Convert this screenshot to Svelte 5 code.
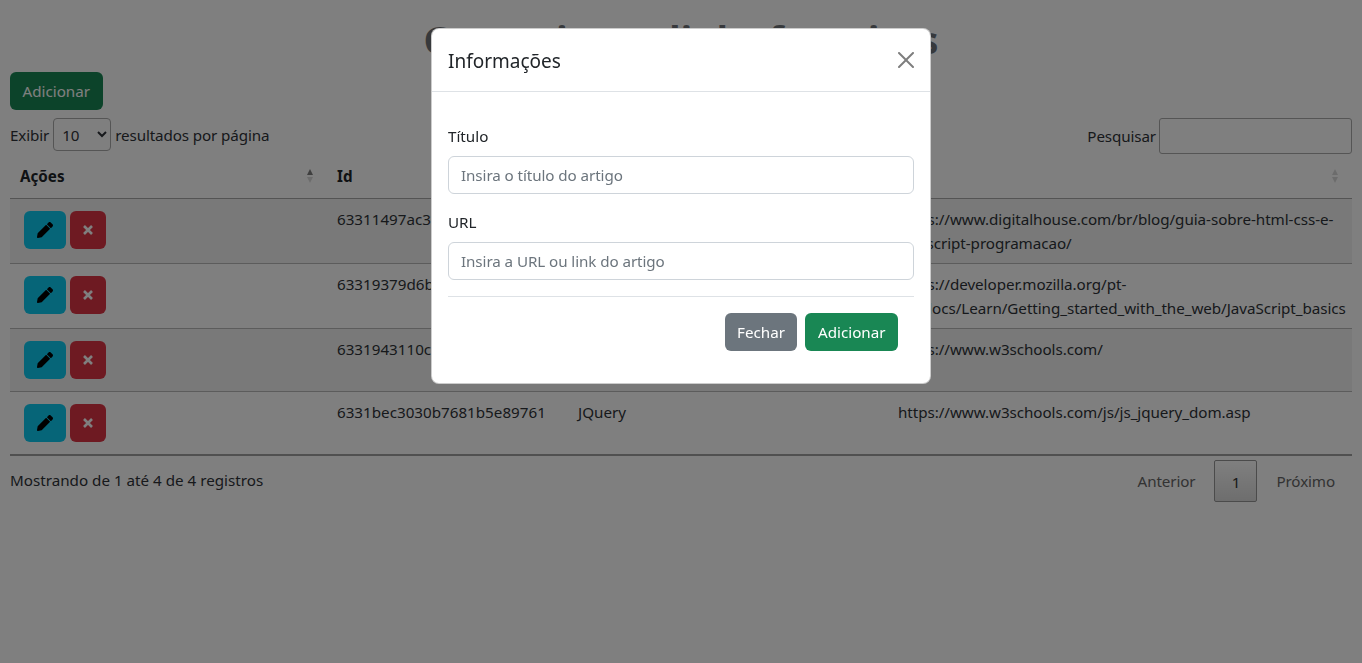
<script>
  const rows = [
    { id: '63311497ac3e5b7f1a2c4d10', title: 'HTML, CSS e JavaScript', url: 'https://www.digitalhouse.com/br/blog/guia-sobre-html-css-e-javascript-programacao/' },
    { id: '63319379d6b1f27c8e5a3b42', title: 'JavaScript básico', url: 'https://developer.mozilla.org/pt-BR/docs/Learn/Getting_started_with_the_web/JavaScript_basics' },
    { id: '6331943110cf8a2d4b7e9c06', title: 'W3Schools', url: 'https://www.w3schools.com/' },
    { id: '6331bec3030b7681b5e89761', title: 'JQuery', url: 'https://www.w3schools.com/js/js_jquery_dom.asp' }
  ];
</script>

<div class="page">
  <h1>Gerenciar os links favoritos</h1>
  <button class="btn green">Adicionar</button>
  <div class="controls">
    <div class="length">
      <span>Exibir</span>
      <select><option>10</option></select>
      <span>resultados por página</span>
    </div>
    <div class="search">
      <span>Pesquisar</span>
      <input type="text" />
    </div>
  </div>
  <table>
    <colgroup>
      <col class="c1" /><col class="c2" /><col class="c3" /><col />
    </colgroup>
    <thead>
      <tr>
        <th>Ações<span class="sort"><i class="up on"></i><i class="down"></i></span></th>
        <th>Id<span class="sort"><i class="up"></i><i class="down"></i></span></th>
        <th>Título<span class="sort"><i class="up"></i><i class="down"></i></span></th>
        <th>URL<span class="sort"><i class="up"></i><i class="down"></i></span></th>
      </tr>
    </thead>
    <tbody>
      {#each rows as r}
        <tr>
          <td class="actions">
            <button class="icon cyan" aria-label="Editar">
              <svg viewBox="0 0 512 512" width="16" height="16"><path d="M497.9 142.1l-46.1 46.1c-4.7 4.7-12.3 4.7-17 0l-111-111c-4.7-4.7-4.7-12.3 0-17l46.1-46.1c18.7-18.7 49.1-18.7 67.900 0l60.100 60.100c18.800 18.700 18.800 49.100 0 67.900zM284.200 99.800L21.600 362.400.400 483.900c-2.900 16.400 11.400 30.600 27.800 27.800l121.500-21.300 262.600-262.600c4.700-4.700 4.700-12.300 0-17l-111-111c-4.800-4.700-12.400-4.700-17.100 0z"/></svg>
            </button>
            <button class="icon red" aria-label="Excluir">
              <svg viewBox="0 0 12 12" width="12" height="12"><path d="M2 2l8 8M10 2l-8 8" stroke="#fff" stroke-width="2.600" fill="none"/></svg>
            </button>
          </td>
          <td>{r.id}</td>
          <td>{r.title}</td>
          <td class="url">{r.url}</td>
        </tr>
      {/each}
    </tbody>
  </table>
  <div class="foot">
    <span>Mostrando de 1 até 4 de 4 registros</span>
    <div class="pager">
      <span class="pg">Anterior</span>
      <span class="pg cur">1</span>
      <span class="pg last">Próximo</span>
    </div>
  </div>
</div>

<div class="backdrop"></div>

<div class="modal">
  <div class="m-head">
    <h5>Informações</h5>
    <button class="close" aria-label="Fechar">
      <svg viewBox="0 0 16 16" width="16" height="16"><path d="M.293.293a1 1 0 011.414 0L8 6.586 14.293.293a1 1 0 111.414 1.414L9.414 8l6.293 6.293a1 1 0 01-1.414 1.414L8 9.414l-6.293 6.293a1 1 0 01-1.414-1.414L6.586 8 .293 1.707a1 1 0 010-1.414z"/></svg>
    </button>
  </div>
  <div class="m-body">
    <label for="t">Título</label>
    <input id="t" class="ctl" placeholder="Insira o título do artigo" />
    <label for="u">URL</label>
    <input id="u" class="ctl" placeholder="Insira a URL ou link do artigo" />
    <div class="m-foot">
      <button class="btn gray">Fechar</button>
      <button class="btn green">Adicionar</button>
    </div>
  </div>
</div>

<style>
  :global(body) {
    margin: 0;
    background: #fff;
    font-family: "Noto Sans", "Open Sans", sans-serif;
    font-size: 15.2px;
    line-height: 24px;
    color: #2f3338;
    overflow: hidden;
  }
  .page {
    padding: 0 10px;
    height: 663px;
    box-sizing: border-box;
  }
  h1 {
    margin: 0;
    padding: 16px 0 8px;
    font-size: 37.800px;
    line-height: 48px;
    font-weight: 700;
    text-align: center;
    color: #6e7378;
  }
  .btn {
    display: inline-block;
    height: 38px;
    padding: 0 11.500px;
    border: 1px solid transparent;
    border-radius: 6px;
    font: inherit;
    color: #fff;
  }
  .green { background: #198754; }
  .gray { background: #6c757d; }
  .controls {
    display: flex;
    justify-content: space-between;
    margin-top: 8px;
    height: 36px;
    letter-spacing: -.12px;
  }
  .length, .search { display: flex; align-items: center; gap: 4px; }
  .length { height: 33px; }
  .length select {
    width: 58px;
    height: 33px;
    padding: 0 4px;
    font: inherit;
    letter-spacing: inherit;
    background: #fff;
    border: 1px solid #aaa;
    border-radius: 4px;
    color: #2f3338;
  }
  .search { gap: 3px; }
  .search input {
    width: 193px;
    height: 36px;
    box-sizing: border-box;
    border: 1px solid #aaa;
    border-radius: 3px;
  }
  table {
    width: 1342px;
    table-layout: fixed;
    border-collapse: separate;
    border-spacing: 0;
  }
  .c1 { width: 317px; }
  .c2 { width: 241px; }
  .c3 { width: 320px; }
  th {
    position: relative;
    text-align: left;
    padding: 10px;
    font-weight: 700;
    border-bottom: 1px solid #a8a8a8;
    color: #212529;
  }
  td {
    padding: 8px 10px;
    vertical-align: top;
    border-bottom: 1px solid #b8b8b8;
  }
  tbody tr:nth-child(odd) td { background: #f2f2f2; }
  tbody tr:last-child td { border-bottom: 2px solid #a0a0a0; }
  td.url { overflow-wrap: anywhere; padding-right: 2px; letter-spacing: -.05px; }
  td.actions { padding: 8px 10px 8px 14px; font-size: 0; line-height: 0; }
  .icon {
    display: inline-flex;
    align-items: center;
    justify-content: center;
    height: 38px;
    margin: 4px 4px 4px 0;
    padding: 0;
    border: 0;
    border-radius: 6px;
    vertical-align: top;
  }
  .cyan { width: 42px; background: #0dcaf0; }
  .red { width: 36px; background: #dc3545; }
  .sort {
    position: absolute;
    right: 14px;
    top: 15px;
    display: flex;
    flex-direction: column;
    gap: 2px;
  }
  .sort i {
    display: block;
    width: 0;
    height: 0;
    border-left: 3px solid transparent;
    border-right: 3px solid transparent;
    opacity: .15;
  }
  .sort .up { border-bottom: 6px solid #000; }
  .sort .down { border-top: 6px solid #000; }
  .sort .on { opacity: .5; }
  .foot {
    display: flex;
    justify-content: space-between;
    align-items: flex-start;
    padding-top: 12px;
  }
  .pager { display: flex; align-items: center; margin-top: -8px; letter-spacing: -.12px; }
  .pg { padding: 8px 19px; color: #666; height: 42px; box-sizing: border-box; line-height: 26px; }
  .last { padding-right: 17px; }
  .cur {
    padding: 8px 0;
    width: 43px;
    text-align: center;
    border: 1px solid #979797;
    border-radius: 2px;
    color: #333;
    background: linear-gradient(#fff, #dcdcdc);
  }
  .backdrop {
    position: fixed;
    inset: 0;
    background: rgba(0, 0, 0, .5);
  }
  .modal {
    position: fixed;
    left: 431px;
    top: 28px;
    width: 500px;
    box-sizing: border-box;
    background: #fff;
    border: 1px solid rgba(0, 0, 0, .2);
    border-radius: 8px;
    color: #212529;
  }
  .m-head {
    display: flex;
    justify-content: space-between;
    align-items: center;
    padding: 16px;
    border-bottom: 1px solid #dee2e6;
  }
  h5 { margin: 1px 0 -1px; font-size: 19px; line-height: 30px; font-weight: 400; }
  .close {
    display: flex;
    width: 16px;
    height: 16px;
    padding: 0;
    border: 0;
    background: none;
    opacity: .5;
  }
  .m-body { padding: 32px 16px 16px; }
  label { display: block; margin-bottom: 8px; }
  .ctl {
    display: block;
    width: 100%;
    height: 38px;
    box-sizing: border-box;
    margin-bottom: 16px;
    padding: 0 12px;
    font: inherit;
    letter-spacing: -.08px;
    border: 1px solid #ced4da;
    border-radius: 6px;
    color: #212529;
  }
  .ctl::placeholder { color: #6c757d; }
  .m-foot {
    display: flex;
    justify-content: flex-end;
    gap: 8px;
    padding: 16px;
    border-top: 1px solid #dee2e6;
  }
</style>
